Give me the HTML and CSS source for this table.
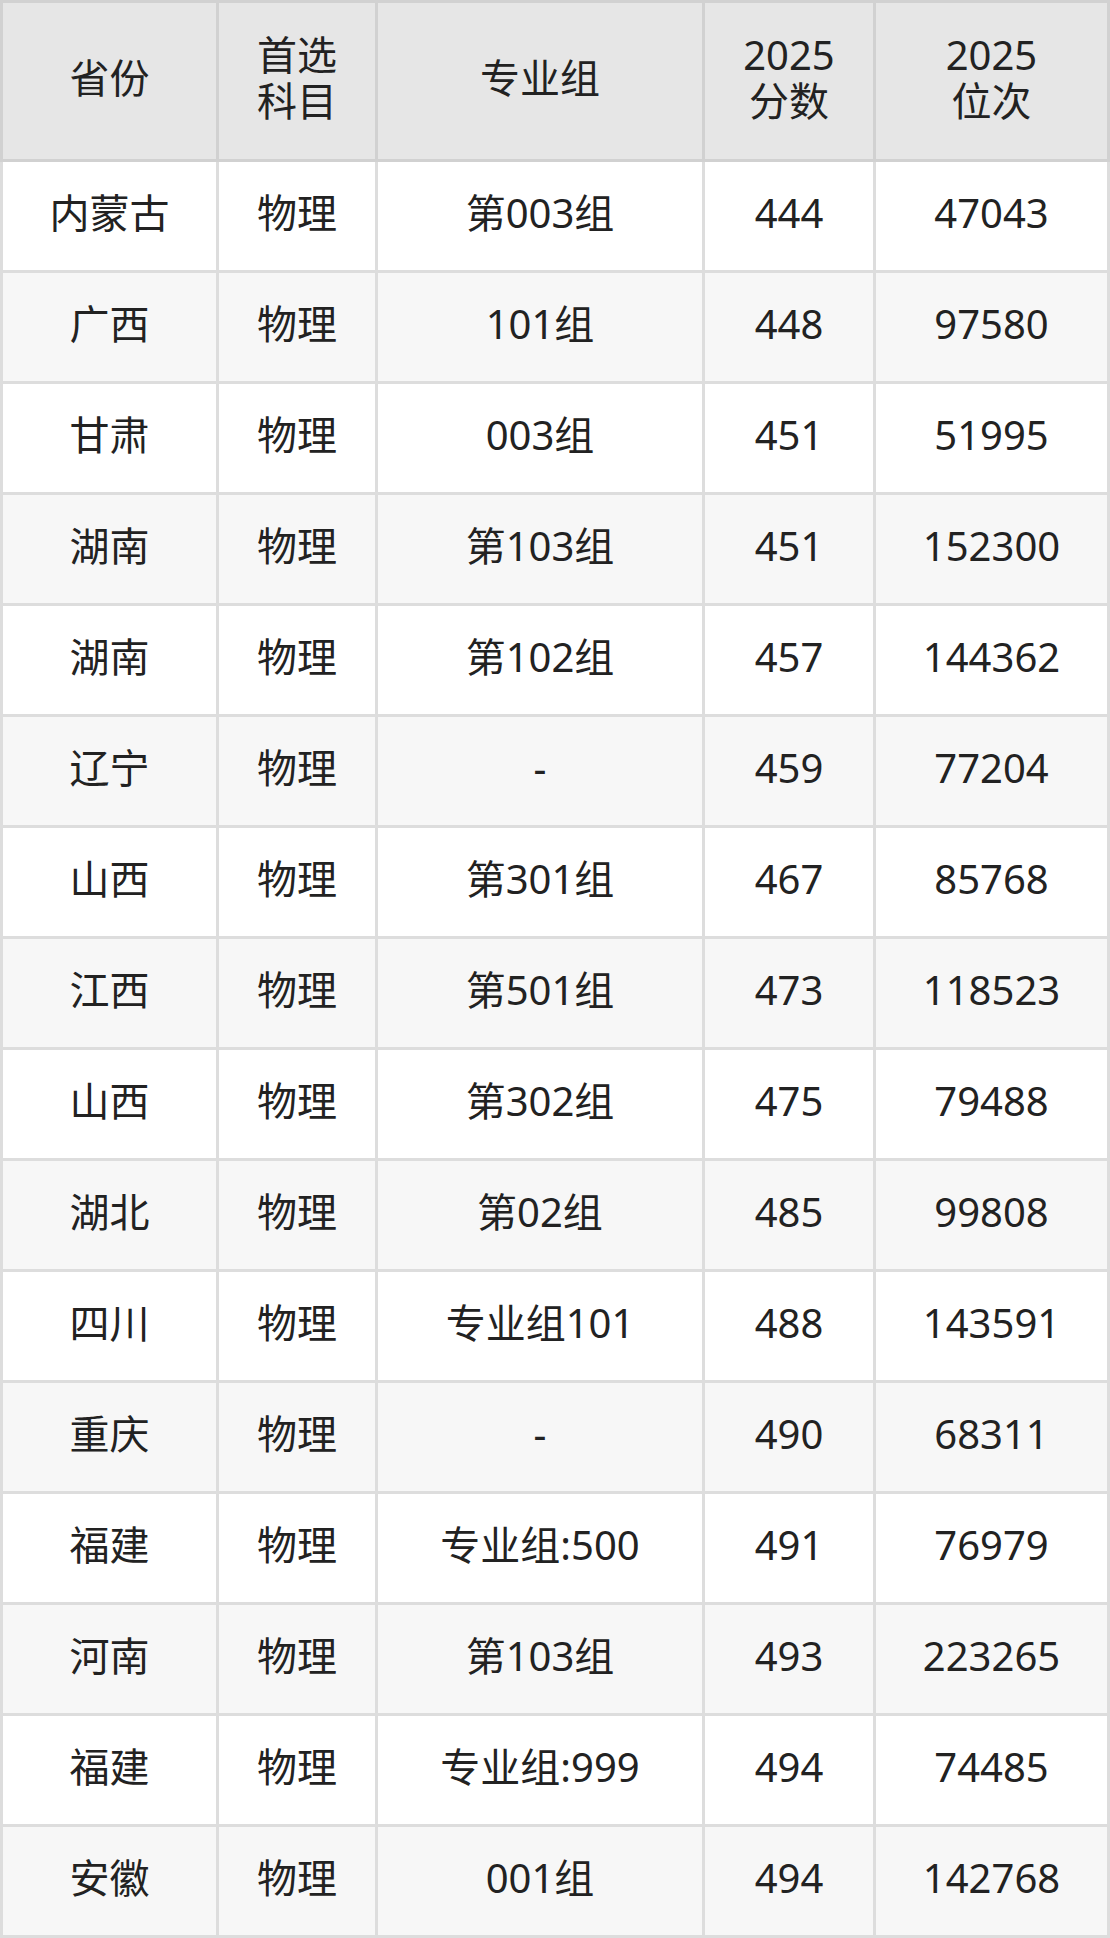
FILE: index.html
```html
<!DOCTYPE html>
<html lang="zh-CN">
<head>
<meta charset="utf-8">
<title>分数位次</title>
<link rel="stylesheet" href="styles.css">
</head>
<body>
<div class="table" role="table">
  <div class="head" role="row">
    <div class="cell" role="columnheader">省份</div>
    <div class="cell" role="columnheader">首选<br>科目</div>
    <div class="cell" role="columnheader">专业组</div>
    <div class="cell" role="columnheader">2025<br>分数</div>
    <div class="cell" role="columnheader">2025<br>位次</div>
  </div>
  <div class="body">
    <div class="row"><div class="cell">内蒙古</div><div class="cell">物理</div><div class="cell">第003组</div><div class="cell">444</div><div class="cell">47043</div></div>
    <div class="row alt"><div class="cell">广西</div><div class="cell">物理</div><div class="cell">101组</div><div class="cell">448</div><div class="cell">97580</div></div>
    <div class="row"><div class="cell">甘肃</div><div class="cell">物理</div><div class="cell">003组</div><div class="cell">451</div><div class="cell">51995</div></div>
    <div class="row alt"><div class="cell">湖南</div><div class="cell">物理</div><div class="cell">第103组</div><div class="cell">451</div><div class="cell">152300</div></div>
    <div class="row"><div class="cell">湖南</div><div class="cell">物理</div><div class="cell">第102组</div><div class="cell">457</div><div class="cell">144362</div></div>
    <div class="row alt"><div class="cell">辽宁</div><div class="cell">物理</div><div class="cell">-</div><div class="cell">459</div><div class="cell">77204</div></div>
    <div class="row"><div class="cell">山西</div><div class="cell">物理</div><div class="cell">第301组</div><div class="cell">467</div><div class="cell">85768</div></div>
    <div class="row alt"><div class="cell">江西</div><div class="cell">物理</div><div class="cell">第501组</div><div class="cell">473</div><div class="cell">118523</div></div>
    <div class="row"><div class="cell">山西</div><div class="cell">物理</div><div class="cell">第302组</div><div class="cell">475</div><div class="cell">79488</div></div>
    <div class="row alt"><div class="cell">湖北</div><div class="cell">物理</div><div class="cell">第02组</div><div class="cell">485</div><div class="cell">99808</div></div>
    <div class="row"><div class="cell">四川</div><div class="cell">物理</div><div class="cell">专业组101</div><div class="cell">488</div><div class="cell">143591</div></div>
    <div class="row alt"><div class="cell">重庆</div><div class="cell">物理</div><div class="cell">-</div><div class="cell">490</div><div class="cell">68311</div></div>
    <div class="row"><div class="cell">福建</div><div class="cell">物理</div><div class="cell">专业组:500</div><div class="cell">491</div><div class="cell">76979</div></div>
    <div class="row alt"><div class="cell">河南</div><div class="cell">物理</div><div class="cell">第103组</div><div class="cell">493</div><div class="cell">223265</div></div>
    <div class="row"><div class="cell">福建</div><div class="cell">物理</div><div class="cell">专业组:999</div><div class="cell">494</div><div class="cell">74485</div></div>
    <div class="row alt"><div class="cell">安徽</div><div class="cell">物理</div><div class="cell">001组</div><div class="cell">494</div><div class="cell">142768</div></div>
  </div>
</div>
</body>
</html>
```

FILE: styles.css
```css
html, body {
  margin: 0;
  padding: 0;
  background: #ffffff;
}

body {
  font-family: "Noto Sans", "Noto Sans CJK SC", sans-serif;
  color: #222222;
  font-size: 40px;
}

.table {
  width: 1110px;
}

.head,
.row {
  display: grid;
  grid-template-columns: 213px 156px 324px 168px 231px;
  column-gap: 3px;
}

.head {
  background: #d1d1d1;
  padding: 3px;
  height: 156px;
}

.head .cell {
  background: #e6e6e6;
  line-height: 46px;
}

.body {
  display: flex;
  flex-direction: column;
  gap: 3px;
  background: #dddddd;
  padding: 0 3px 3px;
}

.row {
  height: 108px;
}

.cell {
  display: flex;
  align-items: center;
  justify-content: center;
  text-align: center;
  background: #ffffff;
  line-height: 1.2;
  padding-bottom: 7px;
  box-sizing: border-box;
}

.row.alt .cell {
  background: #f7f7f7;
}
```
